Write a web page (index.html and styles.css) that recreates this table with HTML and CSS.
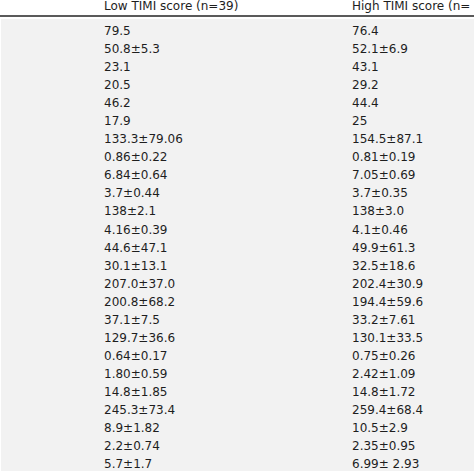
FILE: index.html
```html
<!DOCTYPE html>
<html>
<head>
<meta charset="utf-8">
<link rel="stylesheet" href="styles.css">
</head>
<body>
<div class="page">
  <div class="head">
    <div class="c1">Low TIMI score (n=39)</div>
    <div class="c2">High TIMI score (n=</div>
  </div>
  <div class="body">
    <div class="c1">79.5</div><div class="c2">76.4</div>
    <div class="c1">50.8±5.3</div><div class="c2">52.1±6.9</div>
    <div class="c1">23.1</div><div class="c2">43.1</div>
    <div class="c1">20.5</div><div class="c2">29.2</div>
    <div class="c1">46.2</div><div class="c2">44.4</div>
    <div class="c1">17.9</div><div class="c2">25</div>
    <div class="c1">133.3±79.06</div><div class="c2">154.5±87.1</div>
    <div class="c1">0.86±0.22</div><div class="c2">0.81±0.19</div>
    <div class="c1">6.84±0.64</div><div class="c2">7.05±0.69</div>
    <div class="c1">3.7±0.44</div><div class="c2">3.7±0.35</div>
    <div class="c1">138±2.1</div><div class="c2">138±3.0</div>
    <div class="c1">4.16±0.39</div><div class="c2">4.1±0.46</div>
    <div class="c1">44.6±47.1</div><div class="c2">49.9±61.3</div>
    <div class="c1">30.1±13.1</div><div class="c2">32.5±18.6</div>
    <div class="c1">207.0±37.0</div><div class="c2">202.4±30.9</div>
    <div class="c1">200.8±68.2</div><div class="c2">194.4±59.6</div>
    <div class="c1">37.1±7.5</div><div class="c2">33.2±7.61</div>
    <div class="c1">129.7±36.6</div><div class="c2">130.1±33.5</div>
    <div class="c1">0.64±0.17</div><div class="c2">0.75±0.26</div>
    <div class="c1">1.80±0.59</div><div class="c2">2.42±1.09</div>
    <div class="c1">14.8±1.85</div><div class="c2">14.8±1.72</div>
    <div class="c1">245.3±73.4</div><div class="c2">259.4±68.4</div>
    <div class="c1">8.9±1.82</div><div class="c2">10.5±2.9</div>
    <div class="c1">2.2±0.74</div><div class="c2">2.35±0.95</div>
    <div class="c1">5.7±1.7</div><div class="c2">6.99± 2.93</div>
  </div>
</div>
</body>
</html>
```
FILE: styles.css
```css
html, body {
  margin: 0;
  padding: 0;
  background: #ffffff;
  overflow: hidden;
}
.page {
  width: 474px;
  height: 474px;
  overflow: hidden;
  font-family: "DejaVu Sans", Verdana, sans-serif;
  font-size: 12px;
  color: #1e1e1e;
}
.head {
  display: grid;
  grid-template-columns: 248px 1fr;
  padding-left: 104px;
  height: 15px;
  line-height: 13px;
  border-bottom: 2px solid #5a5a5a;
  white-space: nowrap;
  overflow: hidden;
}
.body {
  margin-top: 2px;
  margin-left: 1px;
  height: 452px;
  background: #f2f2f2;
  display: grid;
  grid-template-columns: 248px 1fr;
  grid-auto-rows: 18.05px;
  line-height: 18.05px;
  padding-left: 103px;
  padding-top: 3px;
  box-sizing: border-box;
  white-space: nowrap;
}
```
